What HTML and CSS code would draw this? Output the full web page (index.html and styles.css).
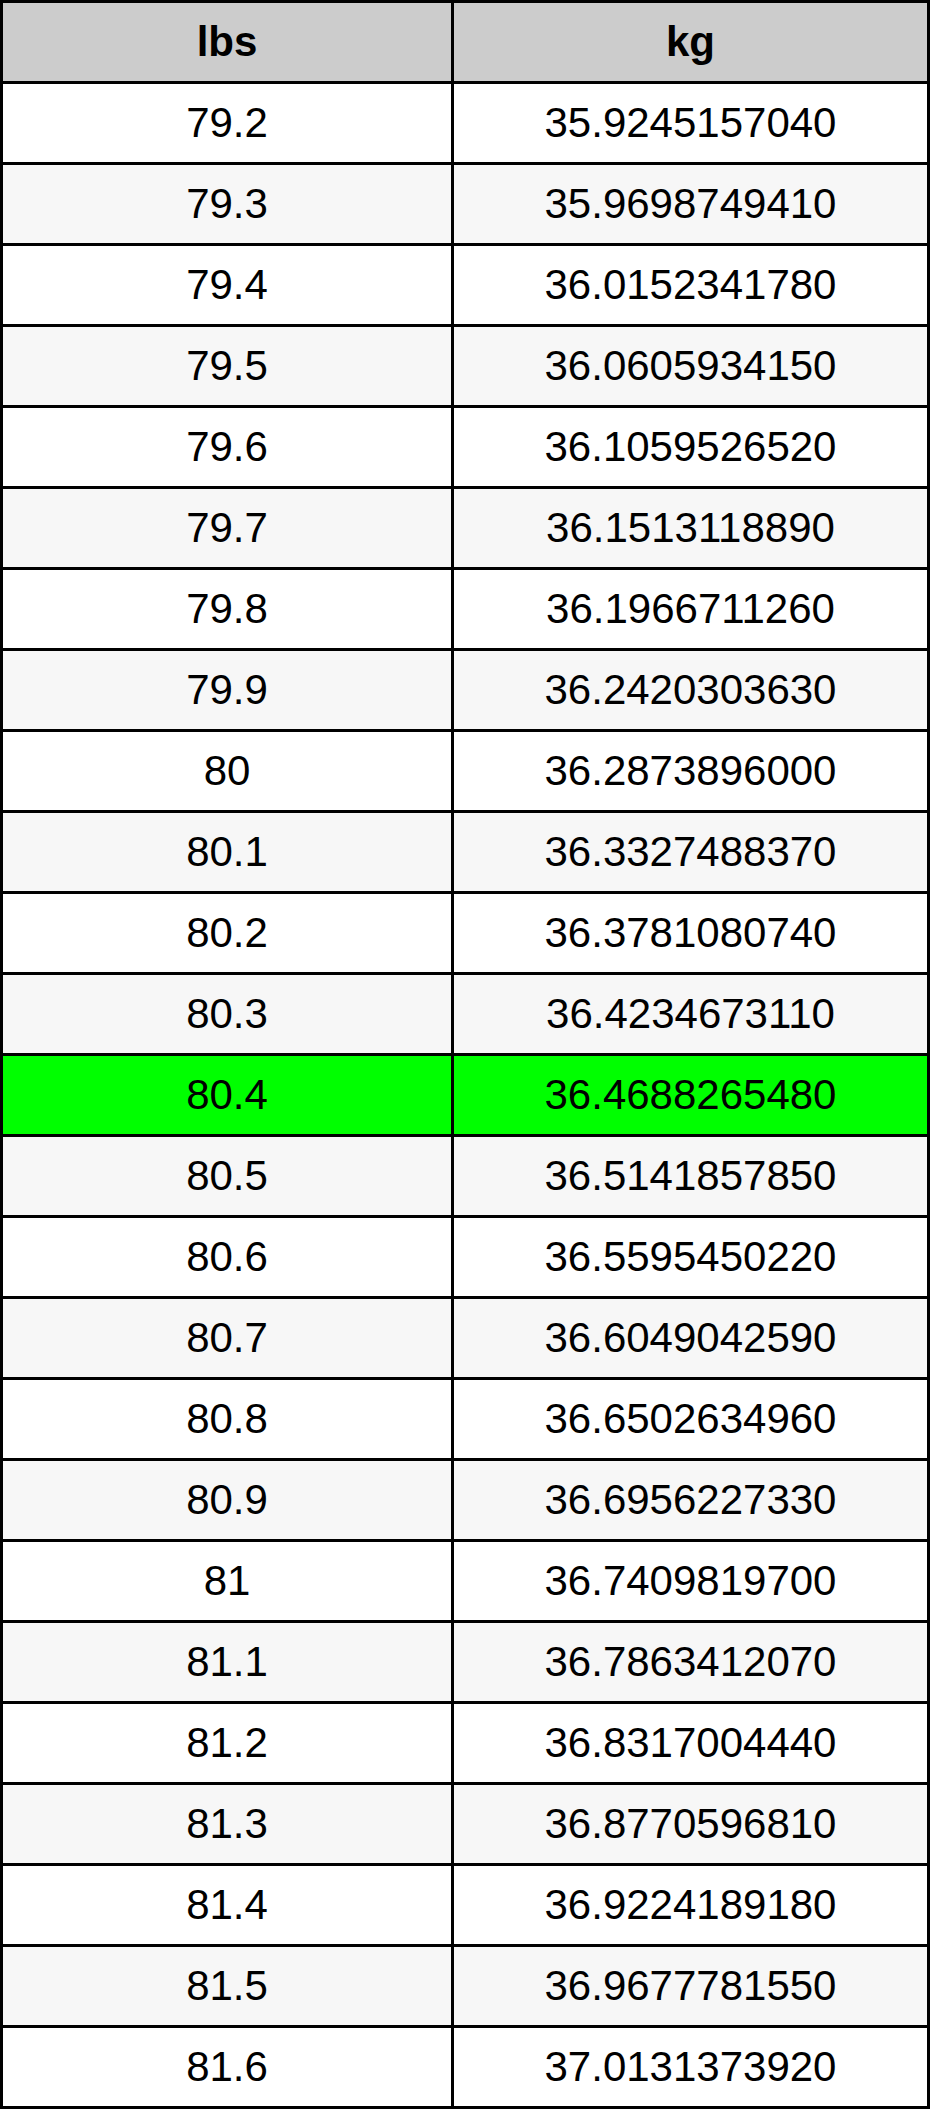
FILE: index.html
```html
<!DOCTYPE html>
<html>
<head>
<meta charset="utf-8">
<title>lbs to kg</title>
<link rel="stylesheet" href="styles.css">
</head>
<body>
<table class="conv">
<colgroup><col class="c1"><col class="c2"></colgroup>
<thead>
<tr><th>lbs</th><th>kg</th></tr>
</thead>
<tbody>
<tr><td>79.2</td><td>35.9245157040</td></tr>
<tr class="alt"><td>79.3</td><td>35.9698749410</td></tr>
<tr><td>79.4</td><td>36.0152341780</td></tr>
<tr class="alt"><td>79.5</td><td>36.0605934150</td></tr>
<tr><td>79.6</td><td>36.1059526520</td></tr>
<tr class="alt"><td>79.7</td><td>36.1513118890</td></tr>
<tr><td>79.8</td><td>36.1966711260</td></tr>
<tr class="alt"><td>79.9</td><td>36.2420303630</td></tr>
<tr><td>80</td><td>36.2873896000</td></tr>
<tr class="alt"><td>80.1</td><td>36.3327488370</td></tr>
<tr><td>80.2</td><td>36.3781080740</td></tr>
<tr class="alt"><td>80.3</td><td>36.4234673110</td></tr>
<tr class="hl"><td>80.4</td><td>36.4688265480</td></tr>
<tr class="alt"><td>80.5</td><td>36.5141857850</td></tr>
<tr><td>80.6</td><td>36.5595450220</td></tr>
<tr class="alt"><td>80.7</td><td>36.6049042590</td></tr>
<tr><td>80.8</td><td>36.6502634960</td></tr>
<tr class="alt"><td>80.9</td><td>36.6956227330</td></tr>
<tr><td>81</td><td>36.7409819700</td></tr>
<tr class="alt"><td>81.1</td><td>36.7863412070</td></tr>
<tr><td>81.2</td><td>36.8317004440</td></tr>
<tr class="alt"><td>81.3</td><td>36.8770596810</td></tr>
<tr><td>81.4</td><td>36.9224189180</td></tr>
<tr class="alt"><td>81.5</td><td>36.9677781550</td></tr>
<tr><td>81.6</td><td>37.0131373920</td></tr>
</tbody>
</table>
</body>
</html>
```
FILE: styles.css
```css
html, body {
  margin: 0;
  padding: 0;
  background: #ffffff;
}
.conv {
  width: 930px;
  table-layout: fixed;
  border-collapse: separate;
  border-spacing: 3px;
  background: #000000;
  font-family: "Liberation Sans", Arial, sans-serif;
  font-size: 42px;
  color: #000000;
}
.c1 { width: 448px; }
.c2 { width: 473px; }
.conv th,
.conv td {
  height: 78px;
  padding: 0;
  text-align: center;
  vertical-align: middle;
  background: #ffffff;
  line-height: 48px;
}
.conv th {
  background: #cccccc;
  font-weight: bold;
}
.conv tr.alt td {
  background: #f7f7f7;
}
.conv tr.hl td {
  background: #00ff00;
}
```
